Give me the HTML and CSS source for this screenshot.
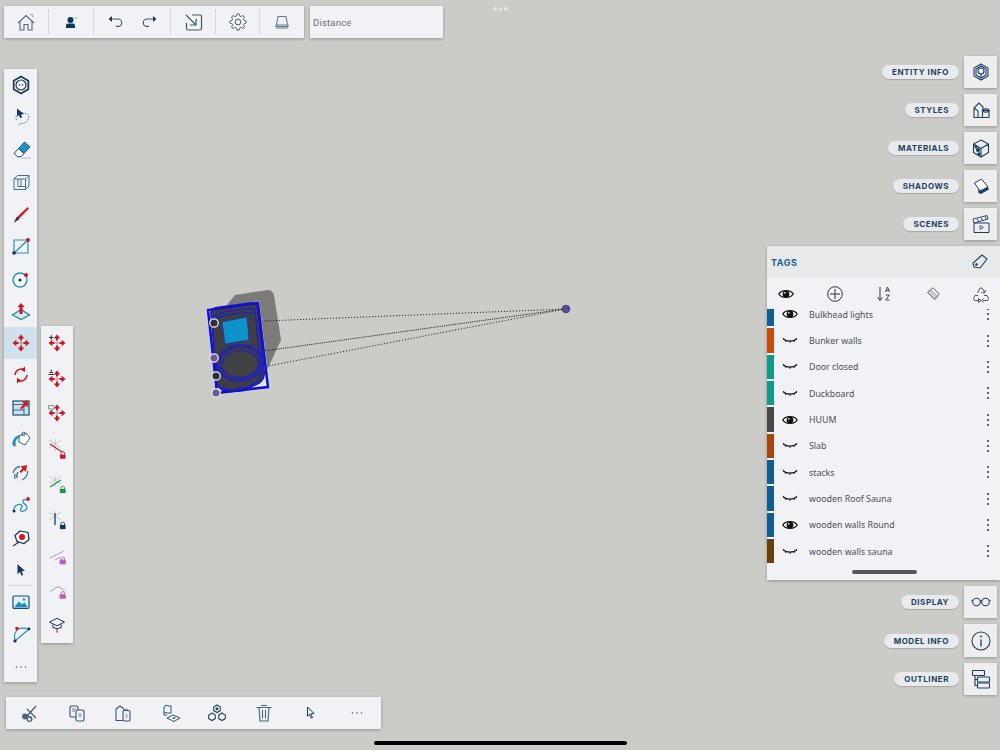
FILE: index.html
```html
<!DOCTYPE html>
<html lang="en">
<head>
<meta charset="UTF-8">
<title>SketchUp</title>
<link rel="stylesheet" href="styles.css">
</head>
<body>

<!-- shared icons -->
<svg class="defs" width="0" height="0">
  <symbol id="i-move" viewBox="0 0 24 24">
    <path d="M12 10v4M10 12h4" stroke="#8a97a3" stroke-width=".8"/>
    <path d="M12 3.500l3.300 3.900h-2.300v2.200h-2V7.400H8.700zM12 20.500l3.300-3.900h-2.300v-2.200h-2v2.200H8.700zM3.500 12l3.900-3.300v2.300h2.200v2H7.400v2.300zM20.500 12l-3.900-3.300v2.300h-2.200v2h2.200v2.300z" fill="#d2121f"/>
  </symbol>
  <symbol id="i-lock" viewBox="0 0 8 9">
    <path d="M2 4V2.600a2 2 0 0 1 4 0V4" fill="none" stroke="currentColor" stroke-width="1"/>
    <rect x=".8" y="3.800" width="6.400" height="5" rx=".8" fill="currentColor"/>
  </symbol>
  <symbol id="i-burst" viewBox="0 0 24 24">
    <path d="M10 1v14M4 4l12 8M16 4L4 12" stroke="#b9c0c7" stroke-width=".8" fill="none"/>
  </symbol>
  <symbol id="i-eye" viewBox="0 0 20 12">
    <path d="M1 6c3-5.500 15-5.500 18 0-3 5.500-15 5.500-18 0z" fill="none" stroke="#111" stroke-width="1.500"/>
    <circle cx="10" cy="6" r="4.200" fill="#111"/>
    <circle cx="8.600" cy="4.600" r="1" fill="#fff"/>
  </symbol>
  <symbol id="i-shut" viewBox="0 0 18 8">
    <path d="M1 2c4 3.600 12 3.600 16 0" fill="none" stroke="#111" stroke-width="1.200"/>
    <path d="M1 1l1.500 1.500M4.500 4l-.8 1.500M9 5v1.800M13.500 4l.8 1.500M17 1l-1.500 1.500" stroke="#111" stroke-width="1"/>
  </symbol>
  <symbol id="i-more" viewBox="0 0 4 14">
    <circle cx="2" cy="2" r="1" fill="#333"/><circle cx="2" cy="7" r="1" fill="#333"/><circle cx="2" cy="12" r="1" fill="#333"/>
  </symbol>
  <symbol id="i-dots" viewBox="0 0 12 4">
    <circle cx="1.500" cy="2" r=".7" fill="#33485c"/><circle cx="6" cy="2" r=".7" fill="#33485c"/><circle cx="10.500" cy="2" r=".7" fill="#33485c"/>
  </symbol>
</svg>

<div class="app">

  <!-- model on the canvas -->
  <svg class="model" width="1000" height="750" viewBox="0 0 1000 750">
    <path d="M235 295l33-5q4 0 6 5l7 45-14 30-27 10-17-70z" fill="#7b7b79"/>
    <g stroke="#1a1a1a" stroke-width=".9" fill="none">
      <path d="M565 309L214 323" stroke-dasharray="1.200 1.800"/>
      <path d="M565 309L214 358" stroke-dasharray="1.200 1"/>
      <path d="M565 309L216 376" stroke-dasharray="1.200 1.800"/>
    </g>
    <path d="M208 310l50-7 10 84-51 6z" fill="#dfe3ee" stroke="#fff" stroke-width="3"/>
    <path d="M211 313q0-4 4-5l36-5q6 0 7 6l6 62q1 8-5 12l-14 7q-12 2-20 1-6-2-8-8z" fill="#3e3e44" stroke="#1c1fb8" stroke-width="1.800"/>
    <path d="M208 310l50-7 10 84-51 6z" fill="none" stroke="#1010d0" stroke-width="2.600"/>
    <path d="M213 316q20-8 42-7M213 319q20-7 40-6M255 310l6 62q0 6-3 9M216 386q20 10 42-5M224 386l-1 5M240 386l-1 4" fill="none" stroke="#1c1fc8" stroke-width="1.400"/>
    <path d="M222 322l25-5 2 23-24 4z" fill="#0c93c9" stroke="#2422b0" stroke-width=".6"/>
    <ellipse cx="240" cy="363" rx="23" ry="18" fill="none" stroke="#1c1fc0" stroke-width="1.500" transform="rotate(-6 240 363)"/>
    <ellipse cx="240" cy="363" rx="20.500" ry="16" fill="none" stroke="#2320b8" stroke-width="1.300" transform="rotate(-6 240 363)"/>
    <ellipse cx="240" cy="364" rx="18" ry="13.500" fill="#414246" stroke="#2320b8" stroke-width="1.100" transform="rotate(-6 240 363)"/>
    <g stroke="#e9e9ee" stroke-width="1.300">
      <circle cx="214" cy="323" r="4.200" fill="#2f2f38"/>
      <circle cx="214" cy="358" r="4.200" fill="#6a5a9a"/>
      <circle cx="216" cy="376" r="4.200" fill="#2f2f38"/>
      <circle cx="216" cy="393" r="4.200" fill="#6a5a9a"/>
    </g>
    <circle cx="566" cy="309" r="3.800" fill="#5a4a9a" stroke="#3a3560" stroke-width=".8"/>
  </svg>

  <!-- top toolbar -->
  <div class="panel topbar">
    <div class="top-group group-home">
      <svg width="24" height="24" viewBox="0 0 24 24" fill="none" stroke="#4c6a80" stroke-width="1.100"><path d="M4 13l8-7.500L20 13M6 11.500V20h4v-5.500h4V20h4v-8.500"/><path d="M16 5l2-.5 1 2.500" stroke="#9aa8b3"/></svg>
    </div>
    <div class="top-group group-user">
      <svg width="24" height="24" viewBox="0 0 24 24"><circle cx="11.500" cy="10" r="3" fill="#0d3760"/><path d="M7 18v-2.500q0-2 2-2h5q2 0 2 2V18z" fill="#0d3760"/><circle cx="17" cy="8" r=".8" fill="#7e93a6"/></svg>
    </div>
    <div class="top-group group-undo">
      <svg width="24" height="24" viewBox="0 0 24 24" fill="none" stroke="#3f566b" stroke-width="1.100"><path d="M9 9h6a3.700 3.700 0 0 1 0 7.400h-2"/><path d="M9 6v6L5.500 9z" fill="#1b3a5a" stroke="none"/></svg>
      <svg width="24" height="24" viewBox="0 0 24 24" fill="none" stroke="#3f566b" stroke-width="1.100"><path d="M15 9H9a3.700 3.700 0 0 0 0 7.400h2"/><path d="M15 6v6l3.500-3z" fill="#1b3a5a" stroke="none"/></svg>
    </div>
    <div class="top-group group-export">
      <svg width="24" height="24" viewBox="0 0 24 24" fill="none" stroke="#3f5a70" stroke-width="1.200"><path d="M11 5h8q1.500 0 1.500 1.500v12q0 1.500-1.500 1.500H7q-1.500 0-1.500-1.500V13"/><path d="M5 5l10 10M15 9v6H9"/></svg>
    </div>
    <div class="top-group group-gear">
      <svg width="18" height="18" viewBox="0 0 24 24" fill="none" stroke="#3f5a70" stroke-width="1.300"><circle cx="12" cy="12" r="3.800"/><path d="M19.400 15a1.650 1.650 0 0 0 .33 1.820l.06.06a2 2 0 0 1 0 2.830 2 2 0 0 1-2.830 0l-.06-.06a1.650 1.650 0 0 0-1.820-.33 1.650 1.650 0 0 0-1 1.510V21a2 2 0 0 1-2 2 2 2 0 0 1-2-2v-.09A1.650 1.650 0 0 0 9 19.400a1.650 1.650 0 0 0-1.820.33l-.06.06a2 2 0 0 1-2.830 0 2 2 0 0 1 0-2.830l.06-.06a1.650 1.650 0 0 0 .33-1.820 1.650 1.650 0 0 0-1.510-1H3a2 2 0 0 1-2-2 2 2 0 0 1 2-2h.09A1.650 1.650 0 0 0 4.600 9a1.650 1.650 0 0 0-.33-1.820l-.06-.06a2 2 0 0 1 0-2.830 2 2 0 0 1 2.830 0l.06.06a1.650 1.650 0 0 0 1.820.33H9a1.650 1.650 0 0 0 1-1.510V3a2 2 0 0 1 2-2 2 2 0 0 1 2 2v.09a1.650 1.650 0 0 0 1 1.510 1.650 1.650 0 0 0 1.820-.33l.06-.06a2 2 0 0 1 2.830 0 2 2 0 0 1 0 2.830l-.06.06a1.650 1.650 0 0 0-.33 1.820V9a1.650 1.650 0 0 0 1.510 1H21a2 2 0 0 1 2 2 2 2 0 0 1-2 2h-.09a1.650 1.650 0 0 0-1.510 1z"/></svg>
    </div>
    <div class="top-group group-last">
      <svg width="24" height="24" viewBox="0 0 24 24" fill="none" stroke="#5f7a90" stroke-width="1.100"><path d="M8 6.500h8l1.500 8.500h-11zM6 15h12v1.500H6zM6 18h12"/></svg>
    </div>
  </div>

  <div class="panel measure">Distance</div>

  <div class="grip"><span></span><span></span><span></span></div>

  <!-- main tools -->
  <div class="panel toolbar">
    <div class="tool"><svg width="24" height="24" viewBox="0 0 24 24" fill="none" stroke="#1d3a58"><path d="M12 3.500l7.300 4.200v8.600L12 20.500l-7.300-4.200V7.700z" stroke-width="1.800"/><circle cx="12" cy="12" r="5" stroke="#1d3a58" stroke-width="1.200"/><circle cx="10.500" cy="12" r=".8" fill="#1d3a58" stroke="none"/><circle cx="13.500" cy="12" r=".8" fill="#1d3a58" stroke="none"/></svg></div>
    <div class="tool"><svg width="24" height="24" viewBox="0 0 24 24" fill="none"><path d="M13 8c5 0 8 2 6.500 6s-6 5-8.500 4.500l-2 2.500" stroke="#3b93b8" stroke-dasharray="1.500 1.200"/><path d="M7.500 15c-1-2-.5-4 .5-5" stroke="#3b93b8" stroke-dasharray="1.500 1.200"/><path d="M8 3.500l7 5.500-3 .5 1 3-2 .5-1-3-2 1.500z" fill="#10365c"/></svg></div>
    <div class="tool"><svg width="24" height="24" viewBox="0 0 24 24"><path d="M15.500 4L21 9l-6 6.500-5.500-5z" fill="#2191c8" stroke="#17405f" stroke-width=".8"/><path d="M9.500 10.500l5.500 5-3 3.200H8.500L5 15.500z" fill="#fff" stroke="#17405f" stroke-width="1"/><path d="M12 20h10" stroke="#a9b8c4"/></svg></div>
    <div class="tool"><svg width="24" height="24" viewBox="0 0 24 24" fill="none" stroke="#44718e"><path d="M5 9l3.500-3.500H20V16l-3.500 3.500H5zM5 9h11.500v10.500M16.500 9L20 5.500"/><path d="M9 9v7.500h7.500M12 9v7.500" stroke="#1d3a58" stroke-width=".7"/></svg></div>
    <div class="tool"><svg width="24" height="24" viewBox="0 0 24 24"><path d="M18.500 5l1.500 1.500L10 17l-2.500.5.500-2.500z" fill="#d81f2c"/><path d="M8 15l-2.500 5 4.500-3" fill="#12314f" stroke="#12314f" stroke-width=".6"/></svg></div>
    <div class="tool"><svg width="24" height="24" viewBox="0 0 24 24" fill="none" stroke="#2a8fb8" stroke-width="1.200"><path d="M5 6h14v13H5zM5 19L19 6"/><circle cx="5" cy="19" r="1.800" fill="#10304f" stroke="none"/><circle cx="19" cy="6" r="2" fill="#d8121f" stroke="none"/></svg></div>
    <div class="tool"><svg width="24" height="24" viewBox="0 0 24 24" fill="none"><circle cx="11" cy="13" r="7" stroke="#2a8fb8" stroke-width="1.300"/><circle cx="11" cy="13" r="1.500" fill="#10304f"/><circle cx="17" cy="8" r="2" fill="#d8121f"/></svg></div>
    <div class="tool"><svg width="24" height="24" viewBox="0 0 24 24" fill="none"><path d="M3.500 16L12 10.500 20.500 16 12 20.500z" fill="#d6e8f1" stroke="#2585ad" stroke-width="1.300"/><path d="M12 4l3.500 4h-2v7h-3V8h-2z" fill="#d8121f"/></svg></div>
    <div class="tool active"><svg width="24" height="24"><use href="#i-move"/></svg></div>
    <div class="tool"><svg width="24" height="24" viewBox="0 0 24 24" fill="none" stroke="#d2121f" stroke-width="1.500"><path d="M6 12a6.500 6.500 0 0 1 10-5M18 12a6.500 6.500 0 0 1-10 5"/><path d="M16 3.500V9l-4-2zM8 20.500V15l4 2z" fill="#d2121f" stroke="none"/></svg></div>
    <div class="tool"><svg width="24" height="24" viewBox="0 0 24 24"><rect x="4" y="5" width="16" height="14" fill="#c9e2ef" stroke="#1f4b6e" stroke-width="1.200"/><path d="M4 8.500h16M15 9v10M4 14h11" stroke="#1f4b6e" stroke-width=".8"/><path d="M19 4.500l-.5 7-2-2-4 4-1.500-1.500 4-4-2-2z" fill="#d8121f"/></svg></div>
    <div class="tool"><svg width="24" height="24" viewBox="0 0 24 24"><path d="M10 8l7-3 4 5-5 7-6-3z" fill="#fff" stroke="#3f5a70"/><path d="M11 7Q5 8 3.500 14q-.5 4 2 4.500 2 0 1-4 0-3 4-5z" fill="#1f90c8"/><circle cx="14.500" cy="6" r="1.800" fill="none" stroke="#3f5a70" stroke-width=".8"/></svg></div>
    <div class="tool"><svg width="24" height="24" viewBox="0 0 24 24" fill="none"><path d="M4 13a9 9 0 0 1 7-6.500M6 19q-1-3 .5-5M13 20q5-2 6-9" stroke="#2f7fa8" stroke-width="1.300"/><path d="M8 18a7 7 0 0 1 1-6" stroke="#10304f"/><path d="M18 5l-1 7-2-2-3 3-1.500-1.500 3-3-2-2z" fill="#d8121f"/></svg></div>
    <div class="tool"><svg width="24" height="24" viewBox="0 0 24 24" fill="none"><path d="M5 18c0-6 8-7 8-4s-3 4-1 5 6-1 6-4-5-3-4-6 2-1 3-1" stroke="#2a8fb8" stroke-width="1.300"/><circle cx="5" cy="19" r="1.500" fill="#10304f"/><circle cx="19" cy="7" r="1.900" fill="#d8121f"/></svg></div>
    <div class="tool"><svg width="24" height="24" viewBox="0 0 24 24" fill="none"><path d="M11 6l8 1.500 1 7-5 4-7-2-2-6z" fill="#fff" stroke="#12314f" stroke-width="1.200"/><circle cx="13" cy="12" r="3" fill="#d8121f"/><path d="M10 17l-6 4" stroke="#12314f" stroke-width="1.200"/></svg></div>
    <div class="tool"><svg width="24" height="24" viewBox="0 0 24 24"><path d="M8.500 7l7.500 7-3.500.3 1.700 3.700-1.600.7-1.700-3.700-2.400 2.200z" fill="#14365a"/></svg></div>
    <div class="tool-sep"></div>
    <div class="tool"><svg width="24" height="24" viewBox="0 0 24 24"><rect x="4" y="6" width="16" height="12.500" rx="1.200" fill="#e2f0f7" stroke="#1d4a6c" stroke-width="1.200"/><path d="M5 17.500l5-6 3 3 2.500-2 3.500 5z" fill="#1d8cc4"/><circle cx="15" cy="9.500" r="1.200" fill="#1d8cc4"/></svg></div>
    <div class="tool"><svg width="24" height="24" viewBox="0 0 24 24" fill="none"><path d="M6 19Q4 10 10 6.500M10 6.500q6-1 10 .5M6 19L20 7" stroke="#2a8fb8" stroke-width="1.200"/><circle cx="6" cy="19" r="1.600" fill="#10304f"/><circle cx="20" cy="7" r="1.400" fill="#10304f"/><circle cx="8" cy="6.500" r="1.800" fill="#d8121f"/></svg></div>
    <div class="tool"><svg width="12" height="4"><use href="#i-dots"/></svg></div>
  </div>

  <!-- move tool flyout -->
  <div class="panel flyout">
    <div class="fly-item"><svg width="24" height="24"><use href="#i-move" y="-1"/><path d="M4 5.500h4.500M6.250 3.250v4.500" stroke="#1d3a58" stroke-width="1.100"/></svg></div>
    <div class="fly-item"><svg width="24" height="24"><use href="#i-move" y="-1"/><path d="M3.500 6.500h5.500M6.250 1.500v3.500M4.500 4.500h3.500" stroke="#1d3a58" stroke-width="1"/></svg></div>
    <div class="fly-item"><svg width="24" height="24"><use href="#i-move" y="-2"/><path d="M3.500 2.500h5.500v3.500h-5.500zM5 7.500h2.500" fill="none" stroke="#7c93a6"/></svg></div>
    <div class="fly-item"><svg width="24" height="24"><use href="#i-burst" y="-3"/><path d="M5 5l12 8" stroke="#d2121f" stroke-width="1.200"/><use href="#i-lock" class="lock-red" x="14" y="12" width="7.500" height="8"/></svg></div>
    <div class="fly-item"><svg width="24" height="24"><use href="#i-burst" y="-3"/><path d="M5 12l11-7" stroke="#169a2c" stroke-width="1.200"/><use href="#i-lock" class="lock-green" x="14" y="10.500" width="7.500" height="8"/></svg></div>
    <div class="fly-item"><svg width="24" height="24"><use href="#i-burst" y="-3"/><path d="M10 2v12" stroke="#14365a" stroke-width="1.200"/><use href="#i-lock" class="lock-navy" x="14" y="10.500" width="7.500" height="8"/></svg></div>
    <div class="fly-item"><svg width="24" height="24" fill="none" stroke="#b887ba"><path d="M5 11l14-7M10 13l5-3" stroke-width=".9"/><use href="#i-lock" class="lock-pink" x="14" y="9.500" width="7.500" height="8"/></svg></div>
    <div class="fly-item"><svg width="24" height="24" fill="none" stroke="#b887ba"><path d="M5 9.500l8-5 7 4" stroke-width=".9"/><use href="#i-lock" class="lock-pink" x="14" y="9" width="7.500" height="8"/></svg></div>
    <div class="fly-item short"><svg width="20" height="20" viewBox="0 0 24 24" fill="none" stroke="#14365a" stroke-width="1.200"><path d="M12 4l9 4.500-9 4.500-9-4.500z"/><path d="M7 11.500V15q5 3 10 0v-3.500"/><path d="M12 16v4" stroke="#d8121f"/><circle cx="12" cy="20.500" r=".9" fill="#d8121f" stroke="none"/></svg></div>
  </div>

  <!-- right hand trays -->
  <div class="tray-top">
    <div class="tray-row"><span class="pill">ENTITY INFO</span><div class="panel square"><svg width="24" height="24" viewBox="0 0 24 24" fill="none" stroke="#1d3f62" stroke-width="1.100"><path d="M12 4l7 4v8l-7 4-7-4V8z"/><path d="M12 6l5 3v6l-5 3-5-3V9z"/><circle cx="12" cy="11" r="3"/><path d="M12 14v3"/></svg></div></div>
    <div class="tray-row"><span class="pill">STYLES</span><div class="panel square"><svg width="24" height="24" viewBox="0 0 24 24" fill="none" stroke="#1d3f62" stroke-width="1.100"><path d="M5 10l5-5 4 4v2.500M5 10v9.500h8M9 19.500V13l-4-3"/><path d="M13.500 12.500h6.500v7h-6.500z"/><ellipse cx="16.750" cy="12.500" rx="3.250" ry="1.600"/></svg></div></div>
    <div class="tray-row"><span class="pill">MATERIALS</span><div class="panel square"><svg width="24" height="24" viewBox="0 0 24 24" fill="none" stroke="#1d3f62" stroke-width="1.100"><path d="M12 4l7.500 4v8.500L12 21l-7.500-4.500V8zM4.500 8l7.500 4.500L19.500 8M12 12.500V21"/><circle cx="9" cy="14" r="1.500" fill="#1d3f62"/><circle cx="7" cy="11" r="1" fill="#1d3f62"/><circle cx="10" cy="18" r="1.200" fill="#1d3f62"/></svg></div></div>
    <div class="tray-row"><span class="pill">SHADOWS</span><div class="panel square"><svg width="24" height="24" viewBox="0 0 24 24" fill="none"><path d="M5.500 9l7-4 6.500 8-8 4z" fill="#fff" stroke="#1d3f62"/><path d="M9 14.500l2 2.500 8-4 1 2.500-8 4.500-2.500-1z" fill="#1d3f62"/></svg></div></div>
    <div class="tray-row"><span class="pill">SCENES</span><div class="panel square"><svg width="24" height="24" viewBox="0 0 24 24" fill="none" stroke="#1d3f62"><path d="M5 11h15v9.500H5z"/><path d="M5 11L4 7l14-3.500 1 3.500zM8 6.500l1.500 3M12 5.500l1.500 3M16 4.500l1.500 3" stroke-width=".9"/><path d="M11 13.500l3.500 2-3.500 2z" stroke-width=".8"/></svg></div></div>
  </div>

  <!-- tags panel -->
  <div class="tags">
    <div class="tags-head">
      <span class="tags-title">TAGS</span>
      <svg width="20" height="20" viewBox="0 0 20 20" fill="none" stroke="#1d3f62" stroke-width="1.100"><path d="M12 3l5 4-7 9-6-1-1-4z"/><circle cx="6.500" cy="12.500" r=".8" fill="#1d3f62"/></svg>
    </div>
    <div class="tags-tools">
      <svg width="16" height="10" viewBox="0 0 20 12"><use href="#i-eye"/></svg>
      <svg width="18" height="18" viewBox="0 0 18 18" fill="none" stroke="#333"><circle cx="9" cy="9" r="7.300"/><path d="M9 4v10M4 9h10"/></svg>
      <svg width="18" height="18" viewBox="0 0 18 18" fill="none" stroke="#333"><path d="M5 2v13M2.500 12.500L5 15.500l2.500-3"/><path d="M10.500 7l2-5 2 5M11.200 5.500h2.600M10.800 10h3.500l-3.500 5h3.700" stroke-width=".9"/></svg>
      <svg width="16" height="16" viewBox="0 0 18 18" fill="none" stroke="#555"><path d="M9 2l7 7-5 6-8-8z" stroke-width="1"/><path d="M3 7l8 8M4.500 5l8 8M6 4l8 8" stroke-width=".7"/></svg>
      <svg width="18" height="18" viewBox="0 0 18 18" fill="none" stroke="#444" stroke-width=".9"><path d="M5.500 8l2.500-5h2l2.500 4M13.500 5l-1 3-3-.5M6 10.500H3L1.500 13.500l1 2H7M9 15.500l-2.500-2v4zM12 10.500l3 0 1.500 3-1 2H11M11.500 13.500l-2 2 2 2"/></svg>
    </div>
    <ul class="tag-list">
      <li class="tag-row first"><span class="swatch c-blue"></span><svg class="eye" width="16" height="10" viewBox="0 0 20 12"><use href="#i-eye"/></svg><span class="tag-name">Bulkhead lights</span><svg class="more" width="4" height="14"><use href="#i-more"/></svg></li>
      <li class="tag-row"><span class="swatch c-orange"></span><svg class="eye" width="16" height="7" viewBox="0 0 18 8"><use href="#i-shut"/></svg><span class="tag-name">Bunker walls</span><svg class="more" width="4" height="14"><use href="#i-more"/></svg></li>
      <li class="tag-row"><span class="swatch c-teal"></span><svg class="eye" width="16" height="7" viewBox="0 0 18 8"><use href="#i-shut"/></svg><span class="tag-name">Door closed</span><svg class="more" width="4" height="14"><use href="#i-more"/></svg></li>
      <li class="tag-row"><span class="swatch c-teal"></span><svg class="eye" width="16" height="7" viewBox="0 0 18 8"><use href="#i-shut"/></svg><span class="tag-name">Duckboard</span><svg class="more" width="4" height="14"><use href="#i-more"/></svg></li>
      <li class="tag-row"><span class="swatch c-grey"></span><svg class="eye" width="16" height="10" viewBox="0 0 20 12"><use href="#i-eye"/></svg><span class="tag-name">HUUM</span><svg class="more" width="4" height="14"><use href="#i-more"/></svg></li>
      <li class="tag-row"><span class="swatch c-rust"></span><svg class="eye" width="16" height="7" viewBox="0 0 18 8"><use href="#i-shut"/></svg><span class="tag-name">Slab</span><svg class="more" width="4" height="14"><use href="#i-more"/></svg></li>
      <li class="tag-row"><span class="swatch c-blue"></span><svg class="eye" width="16" height="7" viewBox="0 0 18 8"><use href="#i-shut"/></svg><span class="tag-name">stacks</span><svg class="more" width="4" height="14"><use href="#i-more"/></svg></li>
      <li class="tag-row"><span class="swatch c-blue"></span><svg class="eye" width="16" height="7" viewBox="0 0 18 8"><use href="#i-shut"/></svg><span class="tag-name">wooden Roof Sauna</span><svg class="more" width="4" height="14"><use href="#i-more"/></svg></li>
      <li class="tag-row"><span class="swatch c-blue"></span><svg class="eye" width="16" height="10" viewBox="0 0 20 12"><use href="#i-eye"/></svg><span class="tag-name">wooden walls Round</span><svg class="more" width="4" height="14"><use href="#i-more"/></svg></li>
      <li class="tag-row"><span class="swatch c-brown"></span><svg class="eye" width="16" height="7" viewBox="0 0 18 8"><use href="#i-shut"/></svg><span class="tag-name">wooden walls sauna</span><svg class="more" width="4" height="14"><use href="#i-more"/></svg></li>
    </ul>
    <div class="tags-foot"><span class="scroll-handle"></span></div>
  </div>

  <div class="tray-bottom">
    <div class="tray-row"><span class="pill">DISPLAY</span><div class="panel square"><svg width="24" height="24" viewBox="0 0 24 24" fill="none" stroke="#1d3f62" stroke-width="1.100"><circle cx="7.500" cy="12" r="3.800"/><circle cx="16.500" cy="12" r="3.800"/><path d="M11 11q1-1 2 0M3.500 11L2.500 10M20.500 11l1-1"/></svg></div></div>
    <div class="tray-row"><span class="pill">MODEL INFO</span><div class="panel square"><svg width="24" height="24" viewBox="0 0 24 24" fill="none" stroke="#1d3f62" stroke-width="1.100"><circle cx="12" cy="12" r="9"/><path d="M12 10.500V17.500" stroke-width="1.300"/><circle cx="12" cy="7.500" r=".9" fill="#1d3f62" stroke="none"/></svg></div></div>
    <div class="tray-row"><span class="pill">OUTLINER</span><div class="panel square"><svg width="24" height="24" viewBox="0 0 24 24" fill="none" stroke="#1d3f62" stroke-width="1.100"><rect x="3.500" y="3.500" width="12" height="5" rx=".8"/><rect x="8.500" y="10" width="12" height="5" rx=".8"/><rect x="8.500" y="16" width="12" height="5" rx=".8"/><path d="M6 8.500V18.500H8.500M6 12.500H8.500"/></svg></div></div>
  </div>

  <!-- edit toolbar -->
  <div class="panel bottombar">
    <div class="edit-item"><svg width="24" height="24" viewBox="0 0 24 24" fill="none" stroke="#44647c" stroke-width="1.300"><path d="M18 5L10 14M18 17L9 8"/><path d="M5 14l5 0 3 4" stroke-width="1"/><circle cx="7" cy="15.500" r="2.300" fill="#44647c"/><circle cx="11.500" cy="18" r="2.300"/></svg></div>
    <div class="edit-item"><svg width="24" height="24" viewBox="0 0 24 24" fill="none" stroke="#34556e" stroke-width="1.100"><rect x="5" y="5" width="8" height="11" rx="1.500"/><rect x="11" y="9" width="8" height="11" rx="1.500" fill="#f1f2f5"/><path d="M7 8h4M7 10h3M13.500 13h3M13.500 15h3" stroke-width=".7"/></svg></div>
    <div class="edit-item"><svg width="24" height="24" viewBox="0 0 24 24" fill="none" stroke="#34556e" stroke-width="1.100"><path d="M5 8l4-3 4 3v11.500H5z"/><rect x="12" y="9.500" width="7" height="10.500" rx="1.200" fill="#f1f2f5"/><path d="M14 9q1.500-2 3 0M14.500 14h2M14.500 16h2" stroke-width=".8"/></svg></div>
    <div class="edit-item"><svg width="24" height="24" viewBox="0 0 24 24" fill="none" stroke="#34556e"><path d="M6 6l2-2 2 1h3v7H9l-3-1z"/><path d="M6 11v3h3"/><path d="M9 17l6-3 7 3-6 3.500z" fill="#f1f2f5"/><path d="M14 17l2-1 2 1-2 1z" fill="#34556e" stroke="none"/></svg></div>
    <div class="edit-item"><svg width="24" height="24" viewBox="0 0 24 24" fill="none" stroke="#24465e" stroke-width="1.100"><path d="M12 4l3.300 2v3.600L12 11.500 8.700 9.600V6zM7 12l3.300 2v3.600L7 19.500l-3.300-1.900V14zM17 12l3.300 2v3.600L17 19.500l-3.300-1.900V14z"/><circle cx="12" cy="7.800" r="1" fill="#24465e"/></svg></div>
    <div class="edit-item"><svg width="24" height="24" viewBox="0 0 24 24" fill="none" stroke="#44647c" stroke-width="1.100"><path d="M4.500 6.500h15M7 6.500l1 13.500h8l1-13.500M9 4.500h6M10.500 9v8.500M13.500 9v8.500"/></svg></div>
    <div class="edit-item"><svg width="24" height="24" viewBox="0 0 24 24"><path d="M9.500 6l6.500 6.500-3.200.3 1.700 3.700-1.400.6-1.700-3.700-1.900 1.900z" fill="#eef1f4" stroke="#1d3a58" stroke-width="1"/></svg></div>
    <div class="edit-item"><svg width="12" height="4"><use href="#i-dots"/></svg></div>
  </div>

  <div class="home-bar"></div>
</div>

</body>
</html>
```

FILE: styles.css
```css
/* Page and canvas */
* {
  box-sizing: border-box;
}

body {
  margin: 0;
  font-family: "Noto Sans", sans-serif;
}

.defs {
  position: absolute;
}

.app {
  position: relative;
  width: 1000px;
  height: 750px;
  overflow: hidden;
  background-color: #cbccc7;
}

.model {
  position: absolute;
  top: 0;
  left: 0;
}

/* Floating panels */
.panel {
  background-color: #f1f2f5;
  box-shadow: 0 1px 3px rgba(0, 0, 0, 0.28);
}

/* Top toolbar */
.topbar {
  position: absolute;
  top: 6px;
  left: 4px;
  width: 300px;
  height: 32px;
  display: flex;
}

.top-group {
  display: flex;
  align-items: center;
  justify-content: center;
  height: 100%;
  position: relative;
}

.top-group::after {
  content: "";
  position: absolute;
  right: 0;
  top: 3px;
  bottom: 3px;
  width: 1px;
  background-color: #d5d7da;
}

.top-group:last-child::after {
  display: none;
}

.group-home { width: 44.500px; }
.group-user { width: 45px; }
.group-undo { width: 77px; gap: 11px; }
.group-export { width: 45px; }
.group-gear { width: 44px; }
.group-last { width: 44.500px; }

.measure {
  position: absolute;
  top: 6px;
  left: 310px;
  width: 133px;
  height: 32px;
  padding-left: 3px;
  display: flex;
  align-items: center;
  font-family: Roboto, sans-serif;
  font-size: 9.500px;
  letter-spacing: 0.2px;
  color: #6c7076;
}

.grip {
  position: absolute;
  top: 7px;
  left: 493px;
  display: flex;
  gap: 2px;
}

.grip span {
  width: 3.500px;
  height: 3.500px;
  border-radius: 50%;
  background-color: #e4e5e3;
}

/* Left tools */
.toolbar {
  position: absolute;
  top: 69px;
  left: 4px;
  width: 33px;
  height: 613px;
  display: flex;
  flex-direction: column;
}

.tool {
  flex: none;
  height: 32.250px;
  display: flex;
  align-items: center;
  justify-content: center;
}

.tool.active {
  background-color: #cfe1ec;
}

.tool-sep {
  flex: none;
  height: 1px;
  margin: 0 4px;
  background-color: #d5d7da;
}

/* Move flyout */
.flyout {
  position: absolute;
  top: 326px;
  left: 41px;
  width: 32px;
  height: 317px;
  display: flex;
  flex-direction: column;
}

.fly-item {
  flex: none;
  height: 35.800px;
  display: flex;
  align-items: center;
  justify-content: center;
}

.fly-item.short {
  height: 26px;
}

.lock-red { color: #d2121f; }
.lock-green { color: #169a2c; }
.lock-navy { color: #14365a; }
.lock-pink { color: #c94fc4; }

/* Right trays */
.tray-top,
.tray-bottom {
  position: absolute;
  right: 3px;
  display: flex;
  flex-direction: column;
}

.tray-top {
  top: 56px;
  gap: 5.600px;
}

.tray-bottom {
  top: 586px;
  gap: 6.100px;
}

.tray-row {
  display: flex;
  align-items: center;
  justify-content: flex-end;
  gap: 5px;
}

.pill {
  height: 14px;
  padding: 0 10px;
  display: flex;
  align-items: center;
  border-radius: 7px;
  background-color: #e9eaed;
  box-shadow: 0 1px 1px rgba(0, 0, 0, 0.18);
  font-family: Inter, sans-serif;
  font-size: 8px;
  font-weight: 700;
  letter-spacing: 0.55px;
  color: #1d3f62;
}

.square {
  width: 33px;
  height: 32.400px;
  display: flex;
  align-items: center;
  justify-content: center;
  background-color: #eeeeef;
}

/* Tags panel */
.tags {
  position: absolute;
  top: 246px;
  left: 767px;
  width: 233px;
  height: 334px;
  display: flex;
  flex-direction: column;
  background-color: #f1f2f5;
  box-shadow: 0 1px 3px rgba(0, 0, 0, 0.28);
}

.tags-head {
  flex: none;
  height: 32px;
  padding: 0 10px 0 4px;
  display: flex;
  align-items: center;
  justify-content: space-between;
  background-color: #e8e9ea;
}

.tags-title {
  font-family: Inter, sans-serif;
  font-size: 9px;
  font-weight: 700;
  letter-spacing: 0.6px;
  color: #1f5f8b;
}

.tags-tools {
  flex: none;
  height: 31px;
  padding: 0 10px 0 11px;
  display: flex;
  align-items: center;
  justify-content: space-between;
}

.tag-list {
  flex: none;
  height: 255px;
  margin: 0;
  padding: 0;
  list-style: none;
  overflow: hidden;
}

.tag-row {
  height: 26.350px;
  display: flex;
  align-items: center;
  font-size: 8.800px;
  color: #4c4f55;
}

.tag-row.first {
  margin-top: -8px;
}

.swatch {
  flex: none;
  align-self: stretch;
  width: 7px;
  margin: 1px 0;
}

.c-blue { background-color: #0f5f94; }
.c-orange { background-color: #c94a0c; }
.c-teal { background-color: #0f9a88; }
.c-grey { background-color: #484848; }
.c-rust { background-color: #a8440c; }
.c-brown { background-color: #664206; }

.eye {
  flex: none;
  margin-left: 8px;
  margin-right: 11px;
}

.tag-name {
  flex: 1;
  padding-top: 1px;
}

.more {
  flex: none;
  margin-right: 10px;
}

.tags-foot {
  flex: 1;
  display: flex;
  justify-content: center;
  padding-top: 6px;
  padding-left: 1px;
}

.scroll-handle {
  width: 65px;
  height: 3.500px;
  border-radius: 2px;
  background-color: #55585c;
}

/* Edit toolbar */
.bottombar {
  position: absolute;
  top: 697px;
  left: 6px;
  width: 375px;
  height: 32px;
  padding: 0 0.500px;
  display: flex;
}

.edit-item {
  flex: 1;
  display: flex;
  align-items: center;
  justify-content: center;
}

.home-bar {
  position: absolute;
  left: 374px;
  top: 741px;
  width: 253px;
  height: 4px;
  border-radius: 2px;
  background-color: #000;
}
```
